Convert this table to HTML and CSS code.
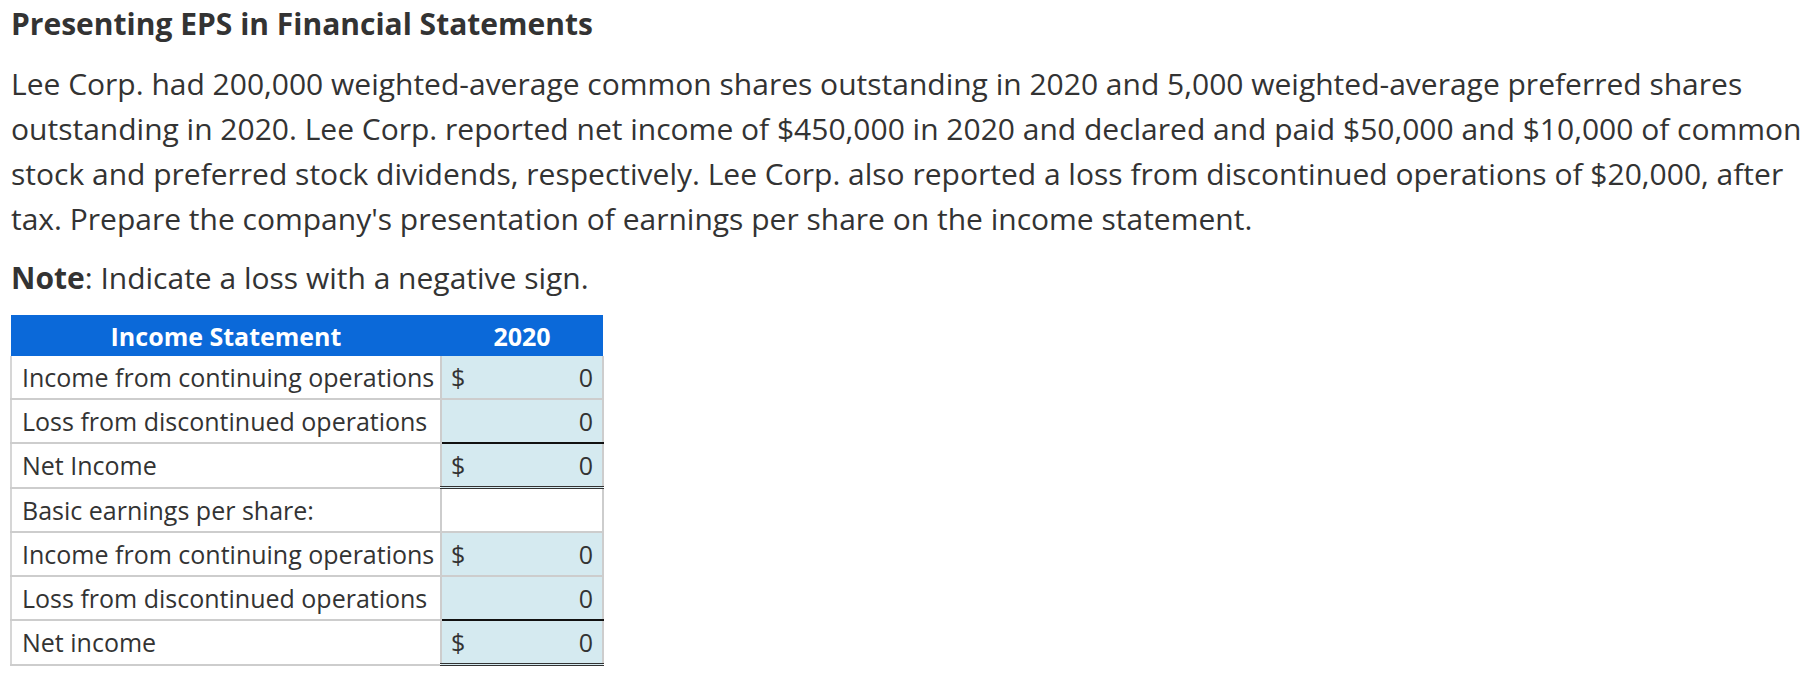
FILE: index.html
```html
<!DOCTYPE html>
<html>
<head>
<meta charset="utf-8">
<link rel="stylesheet" href="styles.css">
</head>
<body>
<div class="page">
  <h1 class="title">Presenting EPS in Financial Statements</h1>
  <p class="problem">Lee Corp. had 200,000 weighted-average common shares outstanding in 2020 and 5,000 weighted-average preferred shares outstanding in 2020. Lee Corp. reported net income of $450,000 in 2020 and declared and paid $50,000 and $10,000 of common stock and preferred stock dividends, respectively. Lee Corp. also reported a loss from discontinued operations of $20,000, after tax. Prepare the company's presentation of earnings per share on the income statement.</p>
  <p class="note"><strong>Note</strong>: Indicate a loss with a negative sign.</p>
  <table class="stmt">
    <thead>
      <tr><th class="h-label">Income Statement</th><th class="h-val">2020</th></tr>
    </thead>
    <tbody>
      <tr><td class="label">Income from continuing operations</td><td class="val"><span class="cur">$</span><span class="num">0</span></td></tr>
      <tr><td class="label">Loss from discontinued operations</td><td class="val pre-total"><span class="cur"></span><span class="num">0</span></td></tr>
      <tr><td class="label">Net Income</td><td class="val total"><span class="cur">$</span><span class="num">0</span></td></tr>
      <tr><td class="label">Basic earnings per share:</td><td class="val empty"></td></tr>
      <tr><td class="label">Income from continuing operations</td><td class="val"><span class="cur">$</span><span class="num">0</span></td></tr>
      <tr><td class="label">Loss from discontinued operations</td><td class="val pre-total"><span class="cur"></span><span class="num">0</span></td></tr>
      <tr><td class="label">Net income</td><td class="val total"><span class="cur">$</span><span class="num">0</span></td></tr>
    </tbody>
  </table>
</div>
</body>
</html>
```
FILE: styles.css
```css
html, body {
  margin: 0;
  padding: 0;
  background: #ffffff;
}
body {
  font-family: "Open Sans", "Liberation Sans", sans-serif;
  color: #333333;
}
.page {
  padding: 4px 0 0 11px;
}
.title {
  font-size: 30px;
  font-weight: 700;
  line-height: 40px;
  margin: 0 0 17px 0;
}
.problem {
  font-size: 30px;
  line-height: 45px;
  margin: 0 0 14px 0;
}
.note {
  font-size: 30px;
  line-height: 45px;
  margin: 0 0 15px 0;
}
.note strong {
  font-weight: 700;
}
.stmt {
  border-collapse: collapse;
  width: 594px;
  margin-left: -1px;
  font-size: 25px;
}
.stmt th {
  background: #0b69d9;
  color: #ffffff;
  font-weight: 700;
  height: 41px;
  padding: 0;
  text-align: center;
}
.h-label { width: 430px; }
.stmt td {
  height: 42px;
  padding: 0;
  border-bottom: 2px solid #cdcdcd;
}
.label {
  border-left: 2px solid #d6d6d6;
  padding-left: 10px !important;
  white-space: nowrap;
}
.val {
  background: #d5eaf0;
  border-left: 2px solid #cdcdcd;
  border-right: 2px solid #cdcdcd;
}
.val.empty {
  background: #ffffff;
}
.val .cur {
  float: left;
  padding-left: 9px;
}
.val .num {
  float: right;
  padding-right: 9px;
}
.stmt td.pre-total {
  border-bottom: 2px solid #111111;
}
.stmt td.total {
  border-top: 2px solid #111111;
  border-bottom: 3px double #333333;
}
```
